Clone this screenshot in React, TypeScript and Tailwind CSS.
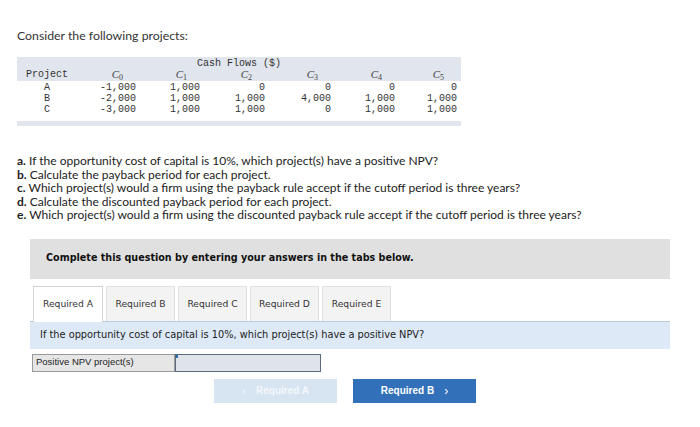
import React from 'react';

const cols = ['C0', 'C1', 'C2', 'C3', 'C4', 'C5'];
const rows = [
  { name: 'A', values: ['-1,000', '1,000', '0', '0', '0', '0'] },
  { name: 'B', values: ['-2,000', '1,000', '1,000', '4,000', '1,000', '1,000'] },
  { name: 'C', values: ['-3,000', '1,000', '1,000', '0', '1,000', '1,000'] },
];

const grid = 'grid grid-cols-[60px_63px_64px_65px_66px_64px_62px]';

const questions = [
  ['a.', 'If the opportunity cost of capital is 10%, which project(s) have a positive NPV?'],
  ['b.', 'Calculate the payback period for each project.'],
  ['c.', 'Which project(s) would a firm using the payback rule accept if the cutoff period is three years?'],
  ['d.', 'Calculate the discounted payback period for each project.'],
  ['e.', 'Which project(s) would a firm using the discounted payback rule accept if the cutoff period is three years?'],
];

const tabs = ['Required A', 'Required B', 'Required C', 'Required D', 'Required E'];

export default function App() {
  return (
    <div className="w-[700px] h-[427px] bg-white overflow-hidden text-[#333]">
      <div className="pl-[17px] pt-[28px]">
        <p className="font-['Lato',sans-serif] text-[12.3px] leading-[16px] text-[#333]">
          Consider the following projects:
        </p>

        {/* Cash flow table */}
        <div className="mt-[13px] w-[444px] font-['Liberation_Mono',monospace] text-[10px] text-[#333]">
          <div className="bg-[#e1e5ed] h-[24px] pt-[1px]">
            <div className="leading-[11px] pl-[180px]">Cash Flows ($)</div>
            <div className={`${grid} leading-[11px]`}>
              <div className="text-center">Project</div>
              {cols.map((c) => (
                <div key={c} className="text-right pr-[17px] font-['Liberation_Serif',serif] italic text-[11px] text-[#444]">
                  {c[0]}
                  <span className="text-[8px] not-italic align-[-2px]">{c[1]}</span>
                </div>
              ))}
            </div>
          </div>
          <div className="pt-[1px] pb-[6px]">
            {rows.map((r) => (
              <div key={r.name} className={`${grid} leading-[11px]`}>
                <div className="text-center">{r.name}</div>
                {r.values.map((v, i) => (
                  <div key={i} className="text-right pr-[4px]">{v}</div>
                ))}
              </div>
            ))}
          </div>
          <div className="bg-[#e1e5ed] h-[5px]"></div>
        </div>

        {/* Questions */}
        <div className="mt-[28px] font-['Lato',sans-serif] text-[12px] leading-[13.5px] text-[#222]">
          {questions.map(([k, q]) => (
            <p key={k}>
              <span className="font-bold">{k}</span> {q}
            </p>
          ))}
        </div>

        {/* Answer area */}
        <div className="ml-[13px] w-[640px] mt-[17px]">
          <div className="bg-[#e0e0e0] h-[40px] flex items-center pl-[16px]">
            <p className="font-['DejaVu_Sans',sans-serif] font-bold text-[9.6px] text-[#111]">
              Complete this question by entering your answers in the tabs below.
            </p>
          </div>

          <div className="mt-[7px] flex gap-[3px] pl-[3px] h-[35px] font-['DejaVu_Sans',sans-serif] text-[9.2px] text-[#333]">
            {tabs.map((t, i) => (
              <div
                key={t}
                className={
                  i === 0
                    ? 'w-[70px] flex items-center justify-center bg-white border border-[#d4d4d4] border-b-0 relative z-10 h-[36px]'
                    : 'w-[69px] flex items-center justify-center bg-[#f3f3f3] border border-[#e0e0e0] border-b-0'
                }
              >
                {t}
              </div>
            ))}
          </div>

          <div className="bg-[#dde9f7] border-t border-[#bccbd9] h-[28px] flex items-center pl-[10px]">
            <p className="font-['DejaVu_Sans',sans-serif] text-[9.8px] text-[#222]">
              If the opportunity cost of capital is 10%, which project(s) have a positive NPV?
            </p>
          </div>

          <div className="mt-[5px] ml-[2px] flex h-[18px]">
            <div className="w-[143px] bg-[#e6e6e6] border border-[#999] flex items-center pl-[3px] font-['Liberation_Sans',sans-serif] text-[9.5px] text-[#222]">
              Positive NPV project(s)
            </div>
            <div className="w-[146px] bg-[#dfe3ea] border-[1.5px] border-[#5c6b7b] relative">
              <div className="absolute left-0 top-0 w-[2px] h-[3px] bg-[#2a6db5]"></div>
            </div>
          </div>

          <div className="mt-[7px] ml-[184px] flex gap-[16px] font-['Liberation_Sans',sans-serif] font-bold text-[10px]">
            <div className="w-[123px] h-[24px] bg-[#d7e4f1] text-[#f4f8fc] flex items-center justify-center gap-[10px]">
              <span className="font-normal text-[12px]">‹</span>
              <span>Required A</span>
            </div>
            <div className="w-[123px] h-[24px] bg-[#3271ba] text-white flex items-center justify-center gap-[10px]">
              <span>Required B</span>
              <span className="font-normal text-[12px]">›</span>
            </div>
          </div>
        </div>
      </div>
    </div>
  );
}
